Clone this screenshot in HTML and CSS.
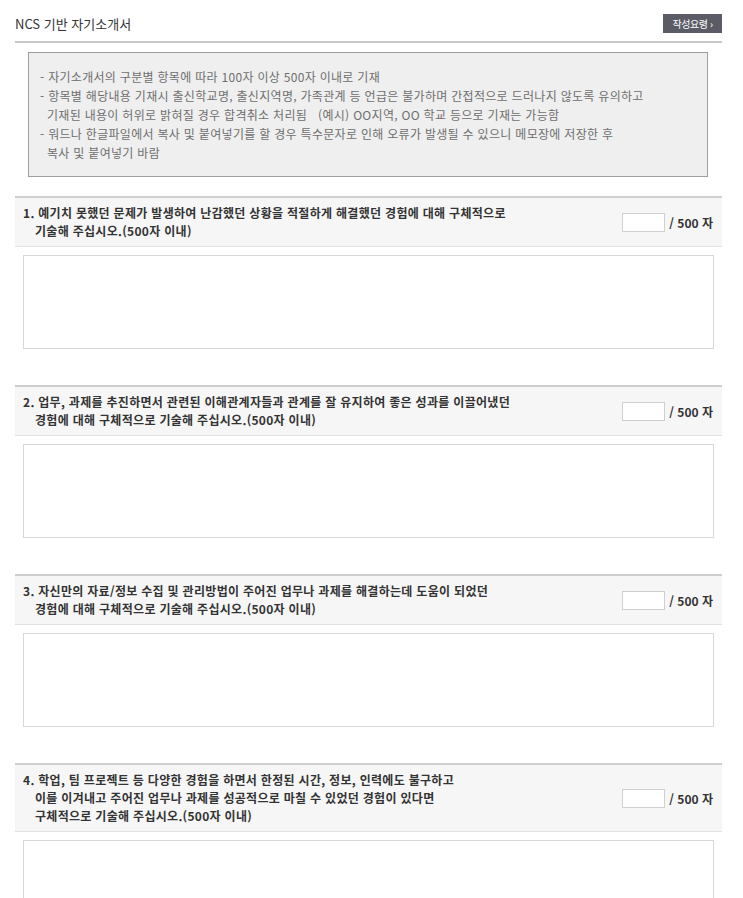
FILE: index.html
```html
<!DOCTYPE html>
<html lang="ko">
<head>
    <meta charset="UTF-8">
    <meta name="viewport" content="width=device-width, initial-scale=1.0">
    <title>NCS 기반 자기소개서</title>
    <link rel="stylesheet" href="styles.css">
</head>
<body>
    <div class="wrap">
        <div class="page-head">
            <h2 class="page-title">NCS 기반 자기소개서</h2>
            <a href="#" class="guide-btn">작성요령 ›</a>
        </div>

        <div class="notice">
            <p>- 자기소개서의 구분별 항목에 따라 100자 이상 500자 이내로 기재</p>
            <p>- 항목별 해당내용 기재시 출신학교명, 출신지역명, 가족관계 등 언급은 불가하며 간접적으로 드러나지 않도록 유의하고<br>기재된 내용이 허위로 밝혀질 경우 합격취소 처리됨 &nbsp; (예시) OO지역, OO 학교 등으로 기재는 가능함</p>
            <p>- 워드나 한글파일에서 복사 및 붙여넣기를 할 경우 특수문자로 인해 오류가 발생될 수 있으니 메모장에 저장한 후<br>복사 및 붙여넣기 바람</p>
        </div>

        <div class="question">
            <div class="q-head">
                <p class="q-title">1. 예기치 못했던 문제가 발생하여 난감했던 상황을 적절하게 해결했던 경험에 대해 구체적으로<br>기술해 주십시오.(500자 이내)</p>
                <div class="q-count">
                    <input type="text" class="count-input" readonly>
                    <span>/ 500 자</span>
                </div>
            </div>
            <div class="q-body">
                <textarea name="answer1"></textarea>
            </div>
        </div>

        <div class="question">
            <div class="q-head">
                <p class="q-title">2. 업무, 과제를 추진하면서 관련된 이해관계자들과 관계를 잘 유지하여 좋은 성과를 이끌어냈던<br>경험에 대해 구체적으로 기술해 주십시오.(500자 이내)</p>
                <div class="q-count">
                    <input type="text" class="count-input" readonly>
                    <span>/ 500 자</span>
                </div>
            </div>
            <div class="q-body">
                <textarea name="answer2"></textarea>
            </div>
        </div>

        <div class="question">
            <div class="q-head">
                <p class="q-title">3. 자신만의 자료/정보 수집 및 관리방법이 주어진 업무나 과제를 해결하는데 도움이 되었던<br>경험에 대해 구체적으로 기술해 주십시오.(500자 이내)</p>
                <div class="q-count">
                    <input type="text" class="count-input" readonly>
                    <span>/ 500 자</span>
                </div>
            </div>
            <div class="q-body">
                <textarea name="answer3"></textarea>
            </div>
        </div>

        <div class="question">
            <div class="q-head">
                <p class="q-title">4. 학업, 팀 프로젝트 등 다양한 경험을 하면서 한정된 시간, 정보, 인력에도 불구하고<br>이를 이겨내고 주어진 업무나 과제를 성공적으로 마칠 수 있었던 경험이 있다면<br>구체적으로 기술해 주십시오.(500자 이내)</p>
                <div class="q-count">
                    <input type="text" class="count-input" readonly>
                    <span>/ 500 자</span>
                </div>
            </div>
            <div class="q-body">
                <textarea name="answer4"></textarea>
            </div>
        </div>
    </div>
</body>
</html>
```

FILE: styles.css
```css
/* Base */
body {
    margin: 0;
    padding: 0;
    background: #fff;
    font-family: "Noto Sans CJK KR", "Noto Sans", sans-serif;
    color: #333;
}

.wrap {
    width: 707px;
    margin: 0 0 0 15px;
}

/* Page header */
.page-head {
    display: flex;
    justify-content: space-between;
    align-items: center;
    padding: 14px 0 8px;
    border-bottom: 2px solid #c8c8c8;
}

.page-title {
    margin: 0;
    font-size: 13px;
    font-weight: normal;
    line-height: 19px;
    color: #333;
}

.guide-btn {
    display: block;
    width: 59px;
    height: 19px;
    line-height: 19px;
    text-align: center;
    background: #5b5b66;
    color: #fff;
    font-size: 10px;
    letter-spacing: -0.4px;
    text-decoration: none;
}

/* Notice box */
.notice {
    margin: 9px 14px 19px 13px;
    padding: 14px 11px;
    background: #efefef;
    border: 1px solid #9e9e9e;
}

.notice p {
    margin: 0;
    padding-left: 7px;
    text-indent: -7px;
    font-size: 12px;
    line-height: 19px;
    color: #6e6e6e;
    letter-spacing: 0.3px;
}

/* Question blocks */
.question {
    margin-bottom: 36px;
    border-top: 2px solid #cfcfcf;
}

.q-head {
    display: flex;
    justify-content: space-between;
    align-items: center;
    padding: 6px 9px 6px 8px;
    background: #f6f6f6;
    border-bottom: 1px solid #e2e2e2;
}

.q-title {
    margin: 0;
    padding-left: 12px;
    text-indent: -12px;
    font-size: 12px;
    font-weight: bold;
    line-height: 18px;
    color: #333;
    letter-spacing: 0.3px;
}

.q-count {
    display: flex;
    align-items: center;
    gap: 4px;
    font-size: 12px;
    font-weight: bold;
    color: #333;
}

.count-input {
    width: 43px;
    height: 19px;
    box-sizing: border-box;
    margin: 0;
    padding: 0 4px;
    border: 1px solid #cfcfcf;
    background: #fff;
}

.q-body {
    padding: 8px 8px 0;
}

.q-body textarea {
    display: block;
    width: 100%;
    height: 94px;
    box-sizing: border-box;
    margin: 0;
    border: 1px solid #d8d8d8;
    resize: none;
    font-family: inherit;
}
```
